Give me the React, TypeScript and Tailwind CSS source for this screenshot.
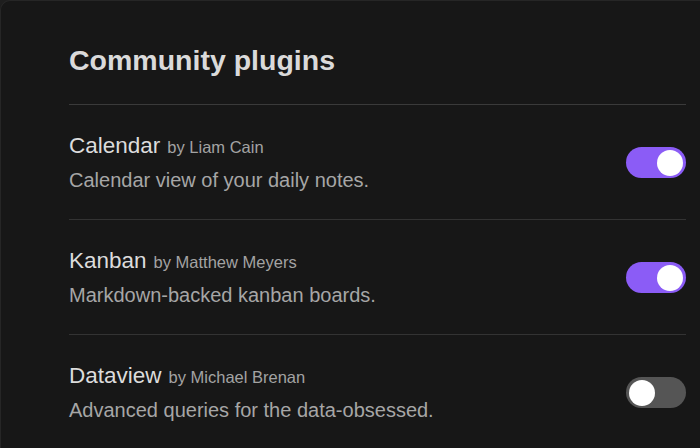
const plugins = [
  { name: 'Calendar', author: 'Liam Cain', desc: 'Calendar view of your daily notes.', on: true },
  { name: 'Kanban', author: 'Matthew Meyers', desc: 'Markdown-backed kanban boards.', on: true },
  { name: 'Dataview', author: 'Michael Brenan', desc: 'Advanced queries for the data-obsessed.', on: false },
]

function Toggle({ on }: { on: boolean }) {
  return (
    <div
      className={
        'w-[60px] h-[31px] rounded-full flex items-center px-[3px] shrink-0 ' +
        (on ? 'bg-[#8b5cf6] justify-end' : 'bg-[#555555] justify-start')
      }
    >
      <div className="w-[26px] h-[26px] rounded-full bg-white" />
    </div>
  )
}

export default function App() {
  return (
    <div className="w-[700px] h-[448px] bg-[#1e1e1e] overflow-hidden">
      <div
        className="h-full bg-[#171717] rounded-tl-[10px] border-l border-t border-[#262626] pl-[68px] pr-[14px]"
        style={{ fontFamily: '"Liberation Sans", Arial, sans-serif' }}
      >
        {/* Header */}
        <div className="pt-[42px] pb-[27px] border-b border-[#3a3a3a]">
          <h1 className="text-[28.5px] leading-[34px] font-bold text-[#dadada]">Community plugins</h1>
        </div>

        {plugins.map((p, i) => (
          <div
            key={p.name}
            className={
              'flex items-center justify-between pt-7 pb-[27px] ' +
              (i < plugins.length - 1 ? 'border-b border-[#333333]' : '')
            }
          >
            <div className="flex flex-col gap-[9px]">
              <div className="text-[22.5px] leading-[26px] h-[26px] text-[#dcdcdc]">
                {p.name}
                <span className="text-[16.5px] text-[#a3a3a3] ml-[7px]">by {p.author}</span>
              </div>
              <div className="text-[20px] leading-[24px] text-[#a6a6a6]">{p.desc}</div>
            </div>
            <Toggle on={p.on} />
          </div>
        ))}
      </div>
    </div>
  )
}
